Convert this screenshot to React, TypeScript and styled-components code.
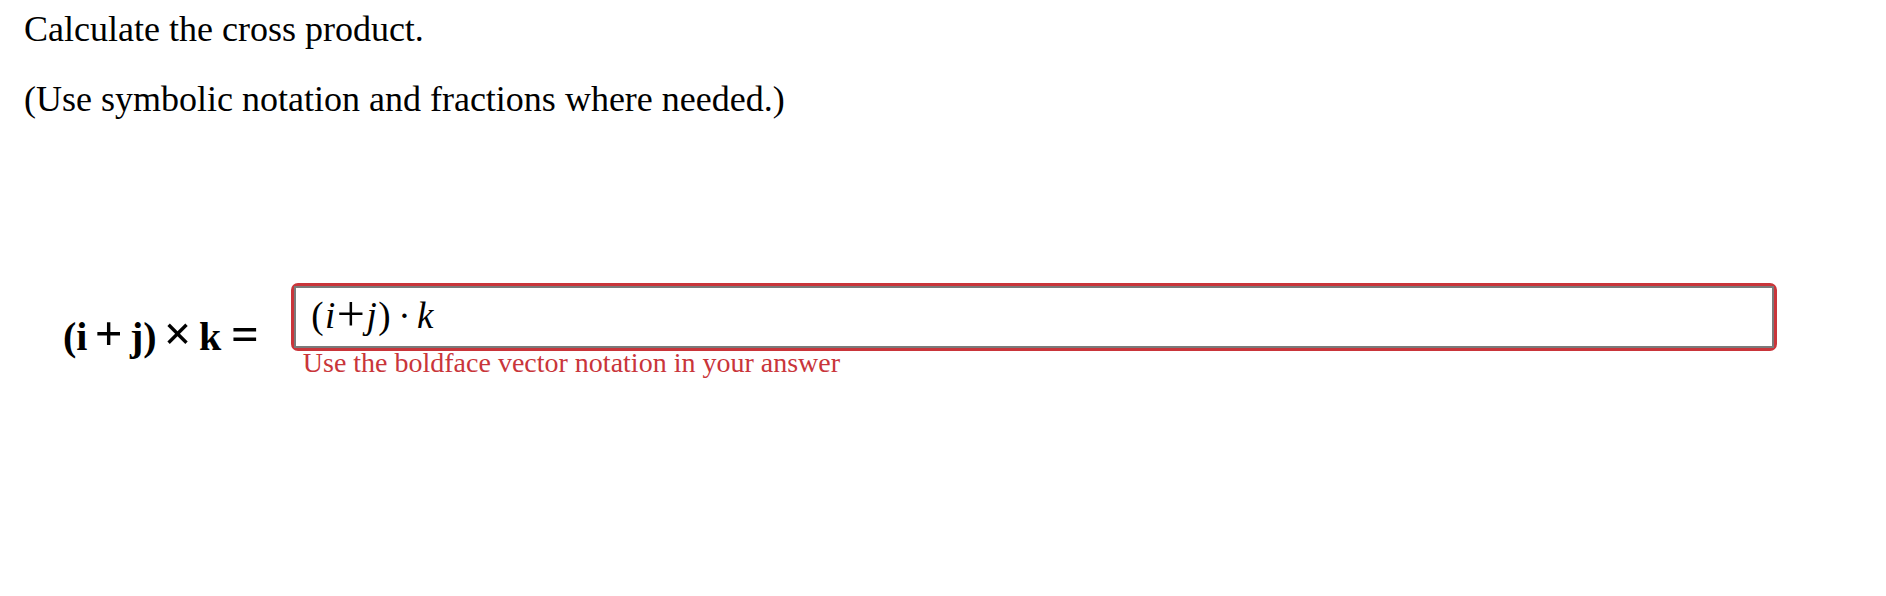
import React from "react";
import styled, { createGlobalStyle } from "styled-components";

const GlobalStyle = createGlobalStyle`
  html, body {
    margin: 0;
    padding: 0;
    background: #fff;
  }
  body {
    font-family: "Liberation Serif", "Times New Roman", serif;
    color: #000;
  }
`;

const Page = styled.div`
  padding: 9px 24px 0 24px;
  height: 596px;
  box-sizing: border-box;
`;

const Prompt = styled.p<{ gap?: number }>`
  margin: 0 0 ${(p) => p.gap ?? 0}px 0;
  font-size: 36px;
  line-height: 41px;
`;

const AnswerRow = styled.div`
  display: flex;
  align-items: flex-start;
  margin-top: 163px;
  padding-left: 39px;
`;

const MathLabel = styled.div`
  font-size: 40px;
  font-weight: 700;
  line-height: 49px;
  margin-top: 29px;
  margin-right: 32px;
  white-space: nowrap;
`;

const Op = styled.span<{ space?: number; last?: boolean }>`
  font-size: 1.22em;
  line-height: 0;
  padding: 0 ${(p) => (p.last ? 0 : p.space ?? 0.15)}em 0 ${(p) => p.space ?? 0.15}em;
`;

const AnswerColumn = styled.div`
  display: flex;
  flex-direction: column;
  width: 1486px;
`;

const AnswerBox = styled.div`
  height: 68px;
  box-sizing: border-box;
  border: 3px solid #c9353a;
  border-radius: 7px;
  display: flex;
`;

const AnswerInner = styled.div`
  flex: 1;
  border: 2px solid #7a7a7a;
  display: flex;
  align-items: center;
  padding: 0 0 4px 14px;
  font-size: 37px;
  font-style: italic;
  white-space: nowrap;
`;

const Upright = styled.span<{ space?: number; big?: boolean }>`
  font-style: normal;
  font-size: ${(p) => (p.big ? "1.35em" : "1em")};
  line-height: 1;
  padding: 0 ${(p) => p.space ?? 0.04}em;
`;

const ErrorText = styled.div`
  color: #c9353a;
  font-size: 28px;
  line-height: 28px;
  margin: -2px 0 0 12px;
`;

export default function App() {
  return (
    <>
      <GlobalStyle />
      <Page>
        <Prompt gap={29}>Calculate the cross product.</Prompt>
        <Prompt>(Use symbolic notation and fractions where needed.)</Prompt>
        <AnswerRow>
          <MathLabel>
            (i<Op>+</Op>j)<Op>×</Op>k<Op space={0.2} last>=</Op>
          </MathLabel>
          <AnswerColumn>
            <AnswerBox>
              <AnswerInner>
                <Upright>(</Upright>i<Upright big space={0.03}>+</Upright>j<Upright>)</Upright>
                <Upright space={0.17}>·</Upright>k
              </AnswerInner>
            </AnswerBox>
            <ErrorText>Use the boldface vector notation in your answer</ErrorText>
          </AnswerColumn>
        </AnswerRow>
      </Page>
    </>
  );
}
